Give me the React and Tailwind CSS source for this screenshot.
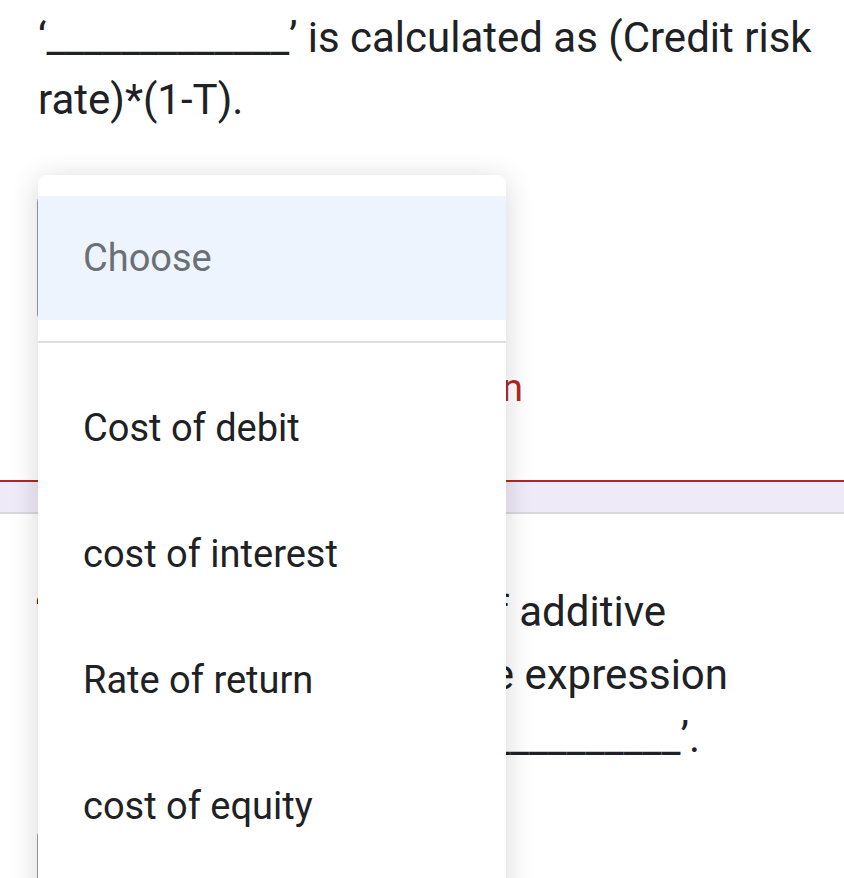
const options = ["Cost of debit", "cost of interest", "Rate of return", "cost of equity"];

export default function App() {
  return (
    <div
      className="relative h-[878px] w-[844px] overflow-hidden bg-white text-[#202124]"
      style={{ fontFamily: "Roboto, 'Noto Sans', sans-serif" }}
    >
      {/* Question 1 */}
      <div className="pl-[38px] pr-[8px] pt-[7px] text-[42px] leading-[62px]">
        ‘<span className="tracking-[-0.3px]">_____________</span>’ is calculated as (Credit risk rate)*(1-T).
      </div>

      {/* Answer select behind the menu */}
      <div className="ml-[37px] mt-[65px] h-[124px] w-[466px] rounded-md border border-[#9aa0a6]" />

      {/* Feedback */}
      <div className="ml-[38px] mt-[38px] w-[485px] text-right text-[38px] leading-[60px] text-[#b3261e]">
        See the explanation
      </div>

      {/* Divider band */}
      <div className="mt-[62px] h-[2px] w-full bg-[#b3261e]" />
      <div className="h-[32px] w-full border-b-2 border-[#d9d8de] bg-[#eeeaf7]" />

      {/* Question 2 */}
      <div className="pt-[66px] text-[42px] leading-[63px]">
        <div className="flex w-[666px] justify-between pl-[35px]">
          <span>‘</span>
          <span>The sum of additive</span>
        </div>
        <div className="w-[728px] text-right">components in the expression</div>
        <div className="w-[700px] text-right">is ‘_____________’.</div>
      </div>

      <div className="ml-[37px] mt-[61px] h-[124px] w-[466px] rounded-md border border-[#9aa0a6]" />

      {/* Open dropdown menu */}
      <div className="absolute left-[38px] top-[175px] h-[760px] w-[468px] rounded-lg bg-white pt-[21px] shadow-[0_4px_28px_rgba(0,0,0,0.16)]">
        <div className="flex h-[124px] items-center bg-[#edf4fd] pl-[45px] text-[38px] text-[#6b6f76]">
          Choose
        </div>
        <div className="mt-[21px] mb-[22px] h-[2px] bg-[#dedede]" />
        {options.map((o) => (
          <div key={o} className="flex h-[126px] items-center pl-[45px] text-[38px] text-[#202124]">
            {o}
          </div>
        ))}
      </div>
    </div>
  );
}
